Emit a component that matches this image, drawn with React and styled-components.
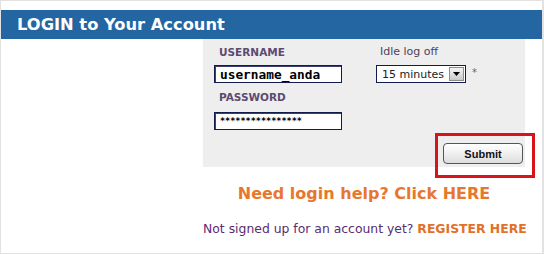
import styled, { createGlobalStyle } from "styled-components";

const GlobalStyle = createGlobalStyle`
  html, body {
    margin: 0;
    padding: 0;
    background: #ffffff;
  }
  body {
    font-family: "DejaVu Sans", Verdana, sans-serif;
  }
`;

const Frame = styled.div`
  position: relative;
  width: 544px;
  height: 254px;
  box-sizing: border-box;
  border: 1px solid #e2e2e2;
  border-right-width: 2px;
  overflow: hidden;
  background: #ffffff;
`;

const Header = styled.div`
  margin-top: 9px;
  height: 29px;
  background: #2366a1;
  display: flex;
  align-items: center;
  padding-left: 16px;
  color: #ffffff;
  font-weight: bold;
  font-size: 16.3px;
`;

const Body = styled.div`
  padding-left: 202px;
  width: 322px;
`;

const Panel = styled.div`
  background: #eeeeee;
  height: 128px;
  box-sizing: border-box;
  padding: 6px 2px 0 11px;
  display: grid;
  grid-template-columns: 162px 1fr;
  grid-template-rows: auto auto auto auto 1fr;
`;

const Label = styled.div`
  font-size: ${(p) => (p.$plain ? "11px" : "10.5px")};
  line-height: 14px;
  font-weight: ${(p) => (p.$plain ? "normal" : "bold")};
  color: ${(p) => (p.$plain ? "#4f4258" : "#5d4a72")};
  padding-left: ${(p) => (p.$plain ? "4px" : "5px")};
  margin-bottom: 6px;
`;

const TextBox = styled.input`
  width: 128px;
  height: 18px;
  box-sizing: border-box;
  border: 1px solid #121c4c;
  box-shadow: inset 1px 1px 0 #3a4170;
  background: #ffffff;
  padding: 0 0 0 5px;
  margin: 0;
  outline: none;
  font-family: "DejaVu Sans Mono", "Liberation Mono", monospace;
  font-size: ${(p) => (p.$dots ? "8.5px" : "12.8px")};
  font-weight: bold;
  color: #000000;
`;

const SelectRow = styled.div`
  display: flex;
  align-items: flex-start;
  gap: 6px;
`;

const SelectBox = styled.div`
  width: 90px;
  height: 18px;
  box-sizing: border-box;
  border: 1px solid #121c4c;
  background: #ffffff;
  display: flex;
  align-items: center;
  justify-content: space-between;
  padding-left: 5px;
  font-size: 11px;
  color: #222222;
`;

const DropButton = styled.div`
  width: 15px;
  height: 14px;
  margin-right: 1px;
  box-sizing: border-box;
  border: 1px solid #8d8d8d;
  background: linear-gradient(#f4f4f4, #c9c9c9);
  display: flex;
  align-items: center;
  justify-content: center;
`;

const Star = styled.span`
  font-size: 10px;
  color: #666666;
  margin-top: 2px;
`;

const SecondLabel = styled(Label)`
  margin-top: 7px;
  margin-bottom: 8px;
`;

const ButtonRow = styled.div`
  grid-column: 1 / 3;
  display: flex;
  justify-content: flex-end;
  align-items: flex-start;
  padding-top: 13px;
`;

const SubmitButton = styled.button`
  width: 80px;
  height: 21px;
  border: 1px solid #555555;
  border-radius: 4px;
  background: linear-gradient(#ffffff, #ececec 60%, #dcdcdc);
  font-family: "Liberation Sans", Arial, sans-serif;
  font-weight: bold;
  font-size: 11px;
  color: #111111;
  padding: 0;
`;

const Highlight = styled.div`
  position: absolute;
  left: 434px;
  top: 132px;
  width: 100px;
  height: 45px;
  box-sizing: border-box;
  border: 3px solid #d8141b;
  pointer-events: none;
`;

const HelpLink = styled.div`
  text-align: center;
  margin-top: 17px;
  font-size: 16px;
  line-height: 20px;
  font-weight: bold;
  color: #e8772e;
`;

const SignUp = styled.div`
  text-align: center;
  margin-top: 17px;
  font-size: 12.4px;
  line-height: 15px;
  color: #5a2c70;
  white-space: nowrap;
`;

const Register = styled.span`
  font-weight: bold;
  color: #e0712a;
`;

export default function App() {
  return (
    <>
      <GlobalStyle />
      <Frame>
        <Header>LOGIN to Your Account</Header>
        <Body>
          <Panel>
            <Label>USERNAME</Label>
            <Label $plain>Idle log off</Label>
            <TextBox readOnly value="username_anda" />
            <SelectRow>
              <SelectBox>
                15 minutes
                <DropButton>
                  <svg width="7" height="4" viewBox="0 0 7 4">
                    <path d="M0 0h7L3.5 4z" fill="#000" />
                  </svg>
                </DropButton>
              </SelectBox>
              <Star>*</Star>
            </SelectRow>
            <SecondLabel>PASSWORD</SecondLabel>
            <div />
            <TextBox $dots readOnly value="****************" />
            <div />
            <ButtonRow>
              <SubmitButton>Submit</SubmitButton>
            </ButtonRow>
          </Panel>
          <HelpLink>Need login help? Click HERE</HelpLink>
          <SignUp>
            Not signed up for an account yet? <Register>REGISTER HERE</Register>
          </SignUp>
        </Body>
        <Highlight />
      </Frame>
    </>
  );
}
